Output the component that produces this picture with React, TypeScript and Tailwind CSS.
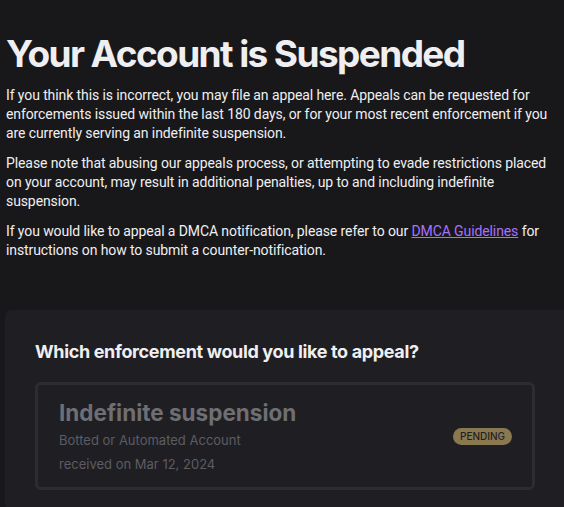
import React from 'react';

export default function App() {
  return (
    <div className="min-h-[507px] w-full overflow-hidden bg-[#18181b] font-['Inter',sans-serif] text-[#efeff1]">
      <div className="px-[6px] pt-[32px]">
        <h1 className="text-[37px] font-bold leading-[44px] tracking-[-1.6px]">Your Account is Suspended</h1>
        <div className="mt-[10px] font-['Roboto',sans-serif] text-[14px] leading-[19px] tracking-[-0.1px]">
          <p>
            If you think this is incorrect, you may file an appeal here. Appeals can be requested for enforcements issued
            within the last 180 days, or for your most recent enforcement if you are currently serving an indefinite
            suspension.
          </p>
          <p className="mt-[11px]">
            Please note that abusing our appeals process, or attempting to evade restrictions placed on your account, may
            result in additional penalties, up to and including indefinite suspension.
          </p>
          <p className="mt-[11px]">
            If you would like to appeal a DMCA notification, please refer to our{' '}
            <a href="#" className="text-[#a970ff] underline">
              DMCA Guidelines
            </a>{' '}
            for instructions on how to submit a counter-notification.
          </p>
        </div>
      </div>

      <div className="ml-[5px] mt-[50px] rounded-l-[6px] bg-[#1f1f23] pl-[30px] pr-[29px] pt-[30px] pb-[20px]">
        <h2 className="text-[18px] font-bold leading-[24px] tracking-[-0.35px]">Which enforcement would you like to appeal?</h2>
        <div className="mt-[18px] flex items-center justify-between rounded-[6px] border-[3px] border-[#2c2c31] px-[21px] pt-[14px] pb-[11px]">
          <div>
            <div className="text-[22.5px] font-bold leading-[28px] text-[#6e6e73]">Indefinite suspension</div>
            <div className="mt-[1px] text-[13px] leading-[24px] text-[#5c5c62]">Botted or Automated Account</div>
            <div className="text-[13px] leading-[24px] text-[#5c5c62]">received on Mar 12, 2024</div>
          </div>
          <span className="mb-[2px] mr-[-1px] rounded-full bg-[#8a7850] px-[7px] text-[10px] font-medium leading-[17px] text-[#1f1f23]">
            PENDING
          </span>
        </div>
      </div>
    </div>
  );
}
